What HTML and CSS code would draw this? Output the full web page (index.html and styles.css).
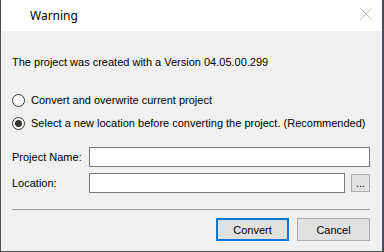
FILE: index.html
```html
<!DOCTYPE html>
<html>
<head>
<meta charset="utf-8">
<link rel="stylesheet" href="styles.css">
</head>
<body>
<div class="window">
  <div class="titlebar">
    <span class="title">Warning</span>
    <svg class="close" width="12" height="12" viewBox="0 0 12 12"><path d="M0.5 0.5L11.5 11.5M11.5 0.5L0.5 11.5" stroke="#b4b4b4" stroke-width="1" fill="none"/></svg>
  </div>
  <div class="content">
    <div class="message">The project was created with a Version 04.05.00.299</div>
    <div class="options">
      <label class="option"><span class="radio"></span>Convert and overwrite current project</label>
      <label class="option"><span class="radio checked"></span>Select a new location before converting the project. (Recommended)</label>
    </div>
    <div class="fields">
      <div class="field"><span class="label">Project Name:</span><span class="input"></span></div>
      <div class="field"><span class="label">Location:</span><span class="input"></span><span class="browse">...</span></div>
    </div>
    <div class="separator"></div>
    <div class="buttons">
      <span class="btn primary">Convert</span>
      <span class="btn">Cancel</span>
    </div>
  </div>
</div>
</body>
</html>
```
FILE: styles.css
```css
html, body { margin: 0; padding: 0; background: #4b4f56; }
.window {
  width: 384px; height: 252px; box-sizing: border-box;
  border-left: 1px solid #4b4f56; border-right: 2px solid #4b4f56; border-bottom: 1px solid #4b4f56;
  background: #f0f0f0; display: flex; flex-direction: column;
  font-family: "Liberation Sans", Arial, sans-serif; font-size: 11px; color: #000;
}
.titlebar {
  height: 31px; background: #fff; display: flex; align-items: center;
  padding-left: 29px; padding-right: 10px;
}
.title { font-family: "Noto Sans", "Open Sans", sans-serif; font-size: 12px; flex: 1; color: #000; margin-top: -1px; }
.close { display: block; margin-top: -4px; }
.content { padding: 0 12px 0 11px; display: flex; flex-direction: column; }
.message { margin-top: 25px; line-height: 13px; }
.options { margin-top: 24px; display: flex; flex-direction: column; gap: 9px; }
.option { display: flex; align-items: center; height: 14px; line-height: 14px; }
.radio {
  width: 13px; height: 13px; box-sizing: border-box; border: 1px solid #333; border-radius: 50%;
  background: #fff; margin-right: 6px; display: flex; align-items: center; justify-content: center;
}
.radio.checked::after { content: ""; width: 7px; height: 7px; border-radius: 50%; background: #333; }
.fields { margin-top: 17px; display: flex; flex-direction: column; gap: 6px; }
.field { display: flex; align-items: center; height: 20px; }
.label { width: 77px; }
.input { flex: 1; height: 20px; box-sizing: border-box; border: 1px solid #7a7a7a; background: #fff; }
.browse {
  width: 19px; height: 18px; box-sizing: border-box; margin-left: 6px; border: 1px solid #adadad;
  background: #e1e1e1; display: flex; align-items: center; justify-content: center; line-height: 12px; color: #000;
}
.separator { margin-top: 16px; height: 1px; background: #a0a0a0; }
.buttons { margin-top: 8px; display: flex; justify-content: flex-end; gap: 8px; }
.btn {
  width: 73px; height: 23px; box-sizing: border-box; border: 1px solid #adadad; background: #e1e1e1;
  display: flex; align-items: center; justify-content: center;
}
.btn.primary { border: 2px solid #0078d7; }
```
